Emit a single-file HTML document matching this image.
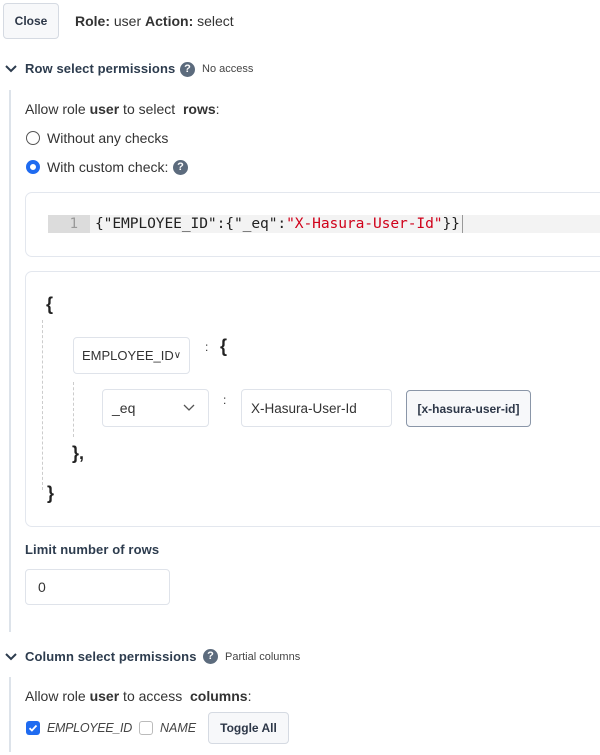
<!DOCTYPE html>
<html><head><style>
*{box-sizing:border-box;margin:0;padding:0}
body{width:600px;height:755px;overflow:hidden;background:#fff;font-family:"Liberation Sans",sans-serif;color:#333;position:relative;font-size:14px}
.a{position:absolute;white-space:nowrap}
.btn{position:absolute;border:1px solid #d5dae2;border-radius:4px;background:#f7f8fa;font-weight:bold;font-size:12px;color:#2d3748;display:flex;align-items:center;justify-content:center}
.h{font-weight:bold;color:#2d3c4e;font-size:13px;letter-spacing:0.1px}
.q{position:absolute;width:15px;height:15px;border-radius:50%;background:#5c6b7d;color:#fff;font-size:11px;font-weight:bold;text-align:center;line-height:15px}
.box{position:absolute;border:1px solid #e3e7ee;border-radius:7px}
.inp{position:absolute;border:1px solid #dfe3ea;border-radius:4px;background:#fff;font-size:14px;display:flex;align-items:center;padding-left:9px;color:#333}
.vl{position:absolute;border-left:2px solid #dde3ea}
.dl{position:absolute;border-left:1px dashed #ccc}
.mono{font-family:"DejaVu Sans Mono","Liberation Mono",monospace}
.br{font-family:"Liberation Sans",sans-serif;font-size:18px;font-weight:bold;color:#222}
</style></head><body>
<div class="btn" style="left:3px;top:3px;width:56px;height:36px">Close</div>
<div class="a" style="left:75px;top:13px;font-size:14px"><b>Role:</b> user <b>Action:</b> select</div>

<svg class="a" style="left:5px;top:64px" width="12" height="10" viewBox="0 0 12 10"><path d="M1 2l5 5 5-5" stroke="#2d3c4e" stroke-width="2" fill="none"/></svg>
<div class="a h" style="left:25px;top:61px">Row select permissions</div>
<div class="q" style="left:180px;top:62px">?</div>
<div class="a" style="left:202px;top:63px;font-size:11px;color:#444">No access</div>

<div class="vl" style="left:9px;top:90px;height:542px"></div>
<div class="a" style="left:25px;top:101px">Allow role <b>user</b> to select &nbsp;<b>rows</b>:</div>
<div class="a" style="left:26px;top:131px;width:14px;height:14px;border:1.5px solid #555;border-radius:50%"></div>
<div class="a" style="left:47px;top:130px">Without any checks</div>
<div class="a" style="left:26px;top:160px;width:14px;height:14px;border:4px solid #1f6bf0;border-radius:50%;background:#fff"></div>
<div class="a" style="left:47px;top:159px">With custom check:</div>
<div class="q" style="left:173px;top:160px">?</div>

<div class="box" style="left:25px;top:192px;width:590px;height:65px"></div>
<div class="a" style="left:48px;top:215px;width:560px;height:18px;background:#f3f3f3"></div>
<div class="a mono" style="left:48px;top:215px;width:42px;height:18px;background:#dcdcdc;color:#999;text-align:right;padding-right:12px;font-size:14px;line-height:18px">1</div>
<div class="a mono" style="left:95px;top:215px;font-size:14.6px;line-height:18px;color:#222;letter-spacing:-0.1px">{"EMPLOYEE_ID":{"_eq":<span style="color:#d0021b">"X-Hasura-User-Id"</span>}}</div>
<div class="a" style="left:462px;top:215px;width:1px;height:18px;background:#999"></div>

<div class="box" style="left:25px;top:271px;width:590px;height:256px"></div>
<div class="a br" style="left:46px;top:294px">{</div>
<div class="dl" style="left:42px;top:320px;height:170px"></div>
<div class="inp" style="left:73px;top:337px;width:117px;height:37px;font-size:13px;padding-left:8px">EMPLOYEE_ID<span style="font-size:10px">&#8744;</span></div>
<div class="a" style="left:205px;top:340px;font-size:12px">:</div>
<div class="a br" style="left:220px;top:336px">{</div>
<div class="dl" style="left:73px;top:382px;height:55px"></div>
<div class="inp" style="left:102px;top:389px;width:107px;height:38px">_eq<svg style="position:absolute;left:80px;top:14px" width="12" height="8" viewBox="0 0 12 8"><path d="M1 1l5 5 5-5" stroke="#555" stroke-width="1.3" fill="none"/></svg></div>
<div class="a" style="left:223px;top:393px;font-size:12px">:</div>
<div class="inp" style="left:241px;top:389px;width:151px;height:38px;font-size:13.5px">X-Hasura-User-Id</div>
<div class="btn" style="left:406px;top:390px;width:125px;height:37px;border-color:#8a96a8;font-size:12px">[x-hasura-user-id]</div>
<div class="a br" style="left:72px;top:443px">},</div>
<div class="a br" style="left:47px;top:483px">}</div>

<div class="a h" style="left:25px;top:542px">Limit number of rows</div>
<div class="inp" style="left:25px;top:569px;width:145px;height:36px;padding-left:12px">0</div>

<svg class="a" style="left:5px;top:652px" width="12" height="10" viewBox="0 0 12 10"><path d="M1 2l5 5 5-5" stroke="#2d3c4e" stroke-width="2" fill="none"/></svg>
<div class="a h" style="left:25px;top:649px">Column select permissions</div>
<div class="q" style="left:203px;top:649px">?</div>
<div class="a" style="left:225px;top:651px;font-size:11px;color:#444">Partial columns</div>

<div class="vl" style="left:9px;top:677px;height:75px"></div>
<div class="a" style="left:25px;top:688px">Allow role <b>user</b> to access &nbsp;<b>columns</b>:</div>
<div class="a" style="left:26px;top:721px;width:14px;height:14px;border-radius:3px;background:#1f6bf0"><svg width="14" height="14" viewBox="0 0 14 14" style="position:absolute;left:0;top:0"><path d="M3.5 7.2l2.4 2.3 4.6-5" stroke="#fff" stroke-width="1.8" fill="none"/></svg></div>
<div class="a" style="left:47px;top:721px;font-style:italic;color:#444;font-size:12.5px;letter-spacing:-0.3px">EMPLOYEE_ID</div>
<div class="a" style="left:139px;top:721px;width:14px;height:14px;border:1px solid #bbb;border-radius:3px"></div>
<div class="a" style="left:160px;top:721px;font-style:italic;color:#444;font-size:12.5px">NAME</div>
<div class="btn" style="left:208px;top:712px;width:81px;height:32px">Toggle All</div>
</body></html>
